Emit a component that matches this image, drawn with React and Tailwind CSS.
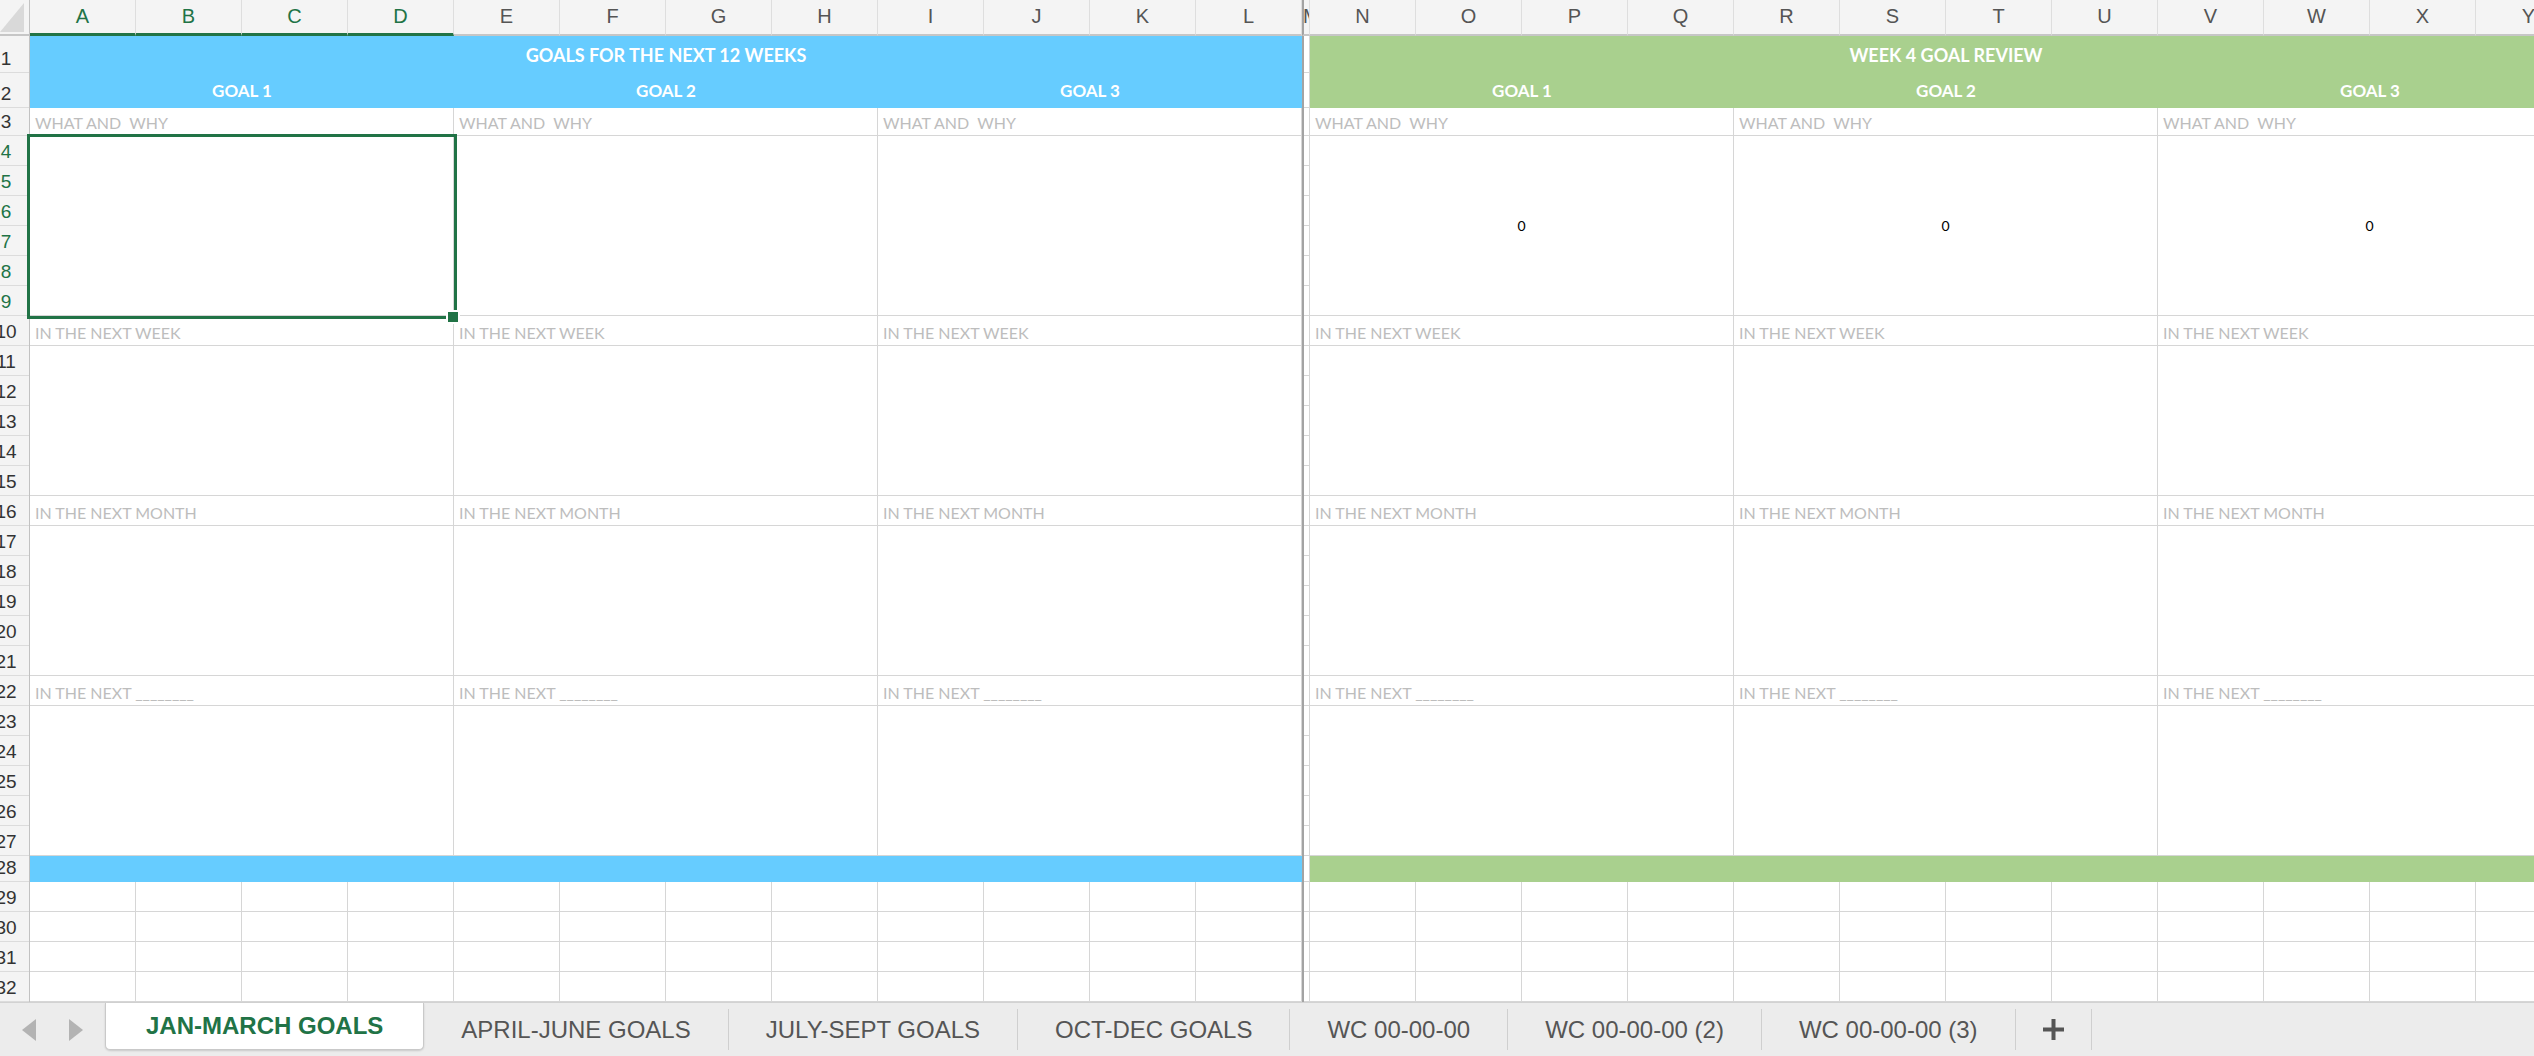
import React from "react";

const LEFT_COLS = ["A", "B", "C", "D", "E", "F", "G", "H", "I", "J", "K", "L"];
const RIGHT_COLS = ["N", "O", "P", "Q", "R", "S", "T", "U", "V", "W", "X", "Y"];
const SELECTED_COLS = ["A", "B", "C", "D"];
const GOALS = ["GOAL 1", "GOAL 2", "GOAL 3"];
const ROWS = Array.from({ length: 32 }, (_, i) => i + 1);
const TABS = ["APRIL-JUNE GOALS", "JULY-SEPT GOALS", "OCT-DEC GOALS", "WC 00-00-00", "WC 00-00-00 (2)", "WC 00-00-00 (3)"];

// excel row heights, rows 1..32
function rowHeight(n) {
    if (n === 1) return "h-[37px]";
    if (n === 2) return "h-[35px]";
    if (n === 3) return "h-[28px]";
    if (n === 28) return "h-[26px]";
    return "h-[30px]";
}

function ColHeader({ letter }) {
    const sel = SELECTED_COLS.includes(letter);
    return (
        <div
            className={`w-[106px] shrink-0 flex items-center justify-center border-r border-r-[#dedede] pb-[2px] text-[20px]
                ${sel ? "border-b-[3px] border-b-[#217346] text-[#217346]" : "border-b-2 border-b-[#c6c6c6] text-[#555]"}`}
        >
            {letter}
        </div>
    );
}

function HeaderRow() {
    return (
        <div className="h-[36px] flex bg-[#f4f4f4] font-['Liberation_Sans',sans-serif]">
            <div className="w-[30px] shrink-0 border-r border-r-[#c2c2c2] border-b-2 border-b-[#c6c6c6] relative">
                <svg width="26" height="32" className="absolute left-0 top-[1px]">
                    <polygon points="0,31 24,31 24,2" fill="#d9d9d9" />
                </svg>
            </div>
            {LEFT_COLS.map((c) => (
                <ColHeader key={c} letter={c} />
            ))}
            <div className="w-[8px] shrink-0 border-l-2 border-l-[#a3a3a3] border-r border-r-[#dedede] border-b-2 border-b-[#c6c6c6] overflow-hidden flex items-center pb-[2px] text-[20px] text-[#555]">
                <span className="-ml-[1px]">M</span>
            </div>
            {RIGHT_COLS.map((c) => (
                <ColHeader key={c} letter={c} />
            ))}
        </div>
    );
}

function RowHeaders() {
    return (
        <div className="w-[30px] shrink-0 flex flex-col bg-[#f4f4f4] border-r border-r-[#c2c2c2] font-['Liberation_Sans',sans-serif]">
            {ROWS.map((n) => (
                <div key={n} className={`${rowHeight(n)} border-b border-b-[#dcdcdc] overflow-hidden flex items-end pb-[4px]`}>
                    <span
                        className={`w-[40px] -ml-[14px] shrink-0 text-center text-[19px] leading-none
                            ${n >= 4 && n <= 9 ? "text-[#217346]" : "text-[#333]"}`}
                    >
                        {n}
                    </span>
                </div>
            ))}
        </div>
    );
}

function SplitColumn() {
    return (
        <div className="w-[8px] shrink-0 flex flex-col border-l-2 border-l-[#a3a3a3] border-r border-r-[#d6d6d6]">
            {ROWS.map((n) => (
                <div key={n} className={`${rowHeight(n)} border-b border-b-[#d6d6d6]`} />
            ))}
        </div>
    );
}

function LabelRow({ text, tall }) {
    return (
        <div className={`flex ${tall ? "h-[28px]" : "h-[30px]"}`}>
            {GOALS.map((g) => (
                <div
                    key={g}
                    className="w-[424px] shrink-0 border-r border-b border-[#d6d6d6] flex items-end pl-[5px] pb-[4px] text-[16px] leading-none text-[#bdbdbd] whitespace-pre"
                >
                    {text}
                </div>
            ))}
        </div>
    );
}

function BoxRow({ tall, zero }) {
    return (
        <div className={`flex ${tall ? "h-[180px]" : "h-[150px]"}`}>
            {GOALS.map((g) => (
                <div
                    key={g}
                    className="w-[424px] shrink-0 border-r border-b border-[#d6d6d6] flex items-center justify-center text-[14px] text-black"
                >
                    {zero ? "0" : ""}
                </div>
            ))}
        </div>
    );
}

function Panel({ fill, title, zero }) {
    return (
        <div className="w-[1272px] shrink-0 flex flex-col font-['Lato',sans-serif]">
            <div className={`${fill} h-[72px] flex flex-col text-white font-bold text-[17px]`}>
                <div className="h-[37px] flex items-center justify-center pt-[2px] text-[18px]">{title}</div>
                <div className="h-[35px] flex">
                    {GOALS.map((g) => (
                        <div key={g} className="w-[424px] flex items-center justify-center">
                            {g}
                        </div>
                    ))}
                </div>
            </div>
            <LabelRow text="WHAT AND  WHY" tall />
            <BoxRow tall zero={zero} />
            <LabelRow text="IN THE NEXT WEEK" />
            <BoxRow />
            <LabelRow text="IN THE NEXT MONTH" />
            <BoxRow />
            <LabelRow text="IN THE NEXT ________" />
            <BoxRow />
            <div className={`${fill} h-[26px]`} />
            {[29, 30, 31, 32].map((r) => (
                <div key={r} className="h-[30px] flex">
                    {LEFT_COLS.map((c) => (
                        <div key={c} className="w-[106px] shrink-0 border-r border-b border-[#d6d6d6]" />
                    ))}
                </div>
            ))}
        </div>
    );
}

function TabBar() {
    return (
        <div className="h-[54px] flex bg-[#ececec] border-t border-[#d2d2d2] font-['Liberation_Sans',sans-serif] text-[24px]">
            <div className="w-[105px] shrink-0 flex items-center justify-center gap-[33px]">
                <svg width="14" height="22">
                    <polygon points="14,0 14,22 0,11" fill="#b3b3b3" />
                </svg>
                <svg width="14" height="22">
                    <polygon points="0,0 0,22 14,11" fill="#b3b3b3" />
                </svg>
            </div>
            <div className="self-start h-[47px] px-[40px] bg-white border-x border-b border-[#c9c9c9] rounded-b-[5px] shadow-[0_1px_2px_rgba(0,0,0,0.15)] flex items-center font-bold text-[#217346]">
                JAN-MARCH GOALS
            </div>
            {TABS.map((t) => (
                <div key={t} className="my-[6px] px-[37px] border-r border-[#cfcfcf] flex items-center text-[#555] whitespace-nowrap">
                    {t}
                </div>
            ))}
            <div className="my-[6px] w-[76px] border-r border-[#cfcfcf] flex items-center justify-center">
                <svg width="21" height="21">
                    <rect x="8.5" y="0" width="4" height="21" fill="#555" />
                    <rect x="0" y="8.5" width="21" height="4" fill="#555" />
                </svg>
            </div>
        </div>
    );
}

export default function App() {
    return (
        <div className="w-[2534px] h-[1056px] overflow-hidden bg-white relative flex flex-col">
            <HeaderRow />
            <div className="flex">
                <RowHeaders />
                <Panel fill="bg-[#66ccff]" title="GOALS FOR THE NEXT 12 WEEKS" />
                <SplitColumn />
                <Panel fill="bg-[#a9d08e]" title="WEEK 4 GOAL REVIEW" zero />
            </div>
            <TabBar />

            {/* selected range A4:D9 */}
            <div className="absolute left-[27px] top-[134px] w-[430px] h-[185px] border-[3px] border-[#217346]" />
            <div className="absolute left-[446px] top-[310px] w-[14px] h-[14px] bg-[#217346] border-2 border-white" />
        </div>
    );
}
